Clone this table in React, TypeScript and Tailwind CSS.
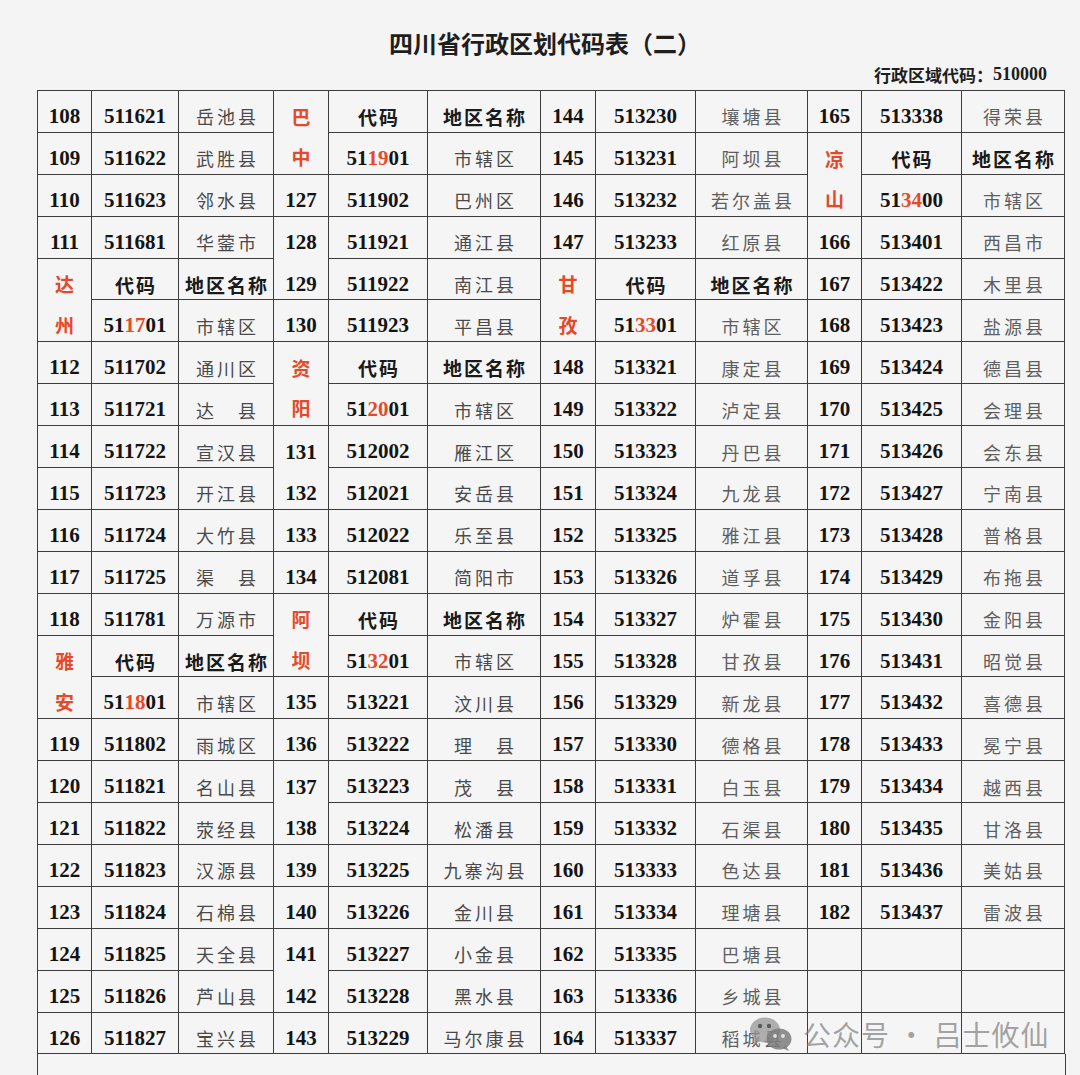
import React from "react";

type Entry =
  | { k: "r"; n: string; c: string; name: string; nb?: boolean }
  | { k: "h"; reg: [string, string] }
  | { k: "s"; c: string }
  | { k: "e" };

const r = (n: string, c: string, name: string, nb?: boolean): Entry => ({ k: "r", n, c, name, nb });
const h = (a: string, b: string): Entry => ({ k: "h", reg: [a, b] });
const s = (c: string): Entry => ({ k: "s", c });
const e: Entry = { k: "e" };

const B1: Entry[] = [
  r("108", "511621", "岳池县"),
  r("109", "511622", "武胜县"),
  r("110", "511623", "邻水县"),
  r("111", "511681", "华蓥市"),
  h("达", "州"),
  s("511701"),
  r("112", "511702", "通川区"),
  r("113", "511721", "达　县"),
  r("114", "511722", "宣汉县"),
  r("115", "511723", "开江县"),
  r("116", "511724", "大竹县"),
  r("117", "511725", "渠　县"),
  r("118", "511781", "万源市"),
  h("雅", "安"),
  s("511801"),
  r("119", "511802", "雨城区"),
  r("120", "511821", "名山县"),
  r("121", "511822", "荥经县"),
  r("122", "511823", "汉源县"),
  r("123", "511824", "石棉县"),
  r("124", "511825", "天全县"),
  r("125", "511826", "芦山县"),
  r("126", "511827", "宝兴县"),
];

const B2: Entry[] = [
  h("巴", "中"),
  s("511901"),
  r("127", "511902", "巴州区"),
  r("128", "511921", "通江县", true),
  r("129", "511922", "南江县"),
  r("130", "511923", "平昌县"),
  h("资", "阳"),
  s("512001"),
  r("131", "512002", "雁江区", true),
  r("132", "512021", "安岳县"),
  r("133", "512022", "乐至县"),
  r("134", "512081", "简阳市"),
  h("阿", "坝"),
  s("513201"),
  r("135", "513221", "汶川县"),
  r("136", "513222", "理　县"),
  r("137", "513223", "茂　县", true),
  r("138", "513224", "松潘县"),
  r("139", "513225", "九寨沟县"),
  r("140", "513226", "金川县"),
  r("141", "513227", "小金县", true),
  r("142", "513228", "黑水县"),
  r("143", "513229", "马尔康县"),
];

const B3: Entry[] = [
  r("144", "513230", "壤塘县"),
  r("145", "513231", "阿坝县"),
  r("146", "513232", "若尔盖县"),
  r("147", "513233", "红原县"),
  h("甘", "孜"),
  s("513301"),
  r("148", "513321", "康定县"),
  r("149", "513322", "泸定县"),
  r("150", "513323", "丹巴县"),
  r("151", "513324", "九龙县"),
  r("152", "513325", "雅江县"),
  r("153", "513326", "道孚县"),
  r("154", "513327", "炉霍县"),
  r("155", "513328", "甘孜县"),
  r("156", "513329", "新龙县"),
  r("157", "513330", "德格县"),
  r("158", "513331", "白玉县"),
  r("159", "513332", "石渠县"),
  r("160", "513333", "色达县"),
  r("161", "513334", "理塘县"),
  r("162", "513335", "巴塘县"),
  r("163", "513336", "乡城县"),
  r("164", "513337", "稻城县"),
];

const B4: Entry[] = [
  r("165", "513338", "得荣县"),
  h("凉", "山"),
  s("513400"),
  r("166", "513401", "西昌市"),
  r("167", "513422", "木里县"),
  r("168", "513423", "盐源县"),
  r("169", "513424", "德昌县"),
  r("170", "513425", "会理县"),
  r("171", "513426", "会东县"),
  r("172", "513427", "宁南县"),
  r("173", "513428", "普格县"),
  r("174", "513429", "布拖县"),
  r("175", "513430", "金阳县"),
  r("176", "513431", "昭觉县"),
  r("177", "513432", "喜德县"),
  r("178", "513433", "冕宁县"),
  r("179", "513434", "越西县"),
  r("180", "513435", "甘洛县"),
  r("181", "513436", "美姑县"),
  r("182", "513437", "雷波县"),
  e,
  e,
  e,
];

const BLOCKS = [B1, B2, B3, B4];

const cellBase =
  "flex items-center justify-center border-r-[1.5px] border-[#3d3d3d] leading-none whitespace-nowrap";
const numCls = "font-['Liberation_Serif',serif] font-bold text-[21px] text-[#141414] pt-[10px]";
const nameCls = "font-['Noto_Sans_CJK_SC',sans-serif] text-[18px] tracking-[3px] pl-[3px] pt-[10px]";
const headCls =
  "font-['Noto_Sans_CJK_SC',sans-serif] font-bold text-[19px] tracking-[2px] pl-[2px] text-[#1a1a1a] pt-[10px]";
const RED = "text-[#e5492a]";

function Block({ entry, bi }: { entry: Entry; bi: number }) {
  const nameColor = bi < 2 ? "text-[#4a4a4a]" : "text-[#5e5e5e]";
  const bb = "border-b-[1.5px]";
  if (entry.k === "r") {
    return (
      <>
        <div className={`${cellBase} ${entry.nb ? "" : bb} ${numCls}`}>{entry.n}</div>
        <div className={`${cellBase} ${bb} ${numCls}`}>{entry.c}</div>
        <div className={`${cellBase} ${bb} ${nameCls} ${nameColor}`}>{entry.name}</div>
      </>
    );
  }
  if (entry.k === "h") {
    return (
      <>
        <div
          className={`row-span-2 flex flex-col border-r-[1.5px] ${bb} border-[#3d3d3d] font-['Noto_Sans_CJK_SC',sans-serif] font-bold text-[19px] leading-none ${RED}`}
        >
          <span className="flex flex-1 items-center justify-center pt-[8px]">{entry.reg[0]}</span>
          <span className="flex flex-1 items-center justify-center pt-[6px]">{entry.reg[1]}</span>
        </div>
        <div className={`${cellBase} ${bb} ${headCls}`}>代码</div>
        <div className={`${cellBase} ${bb} ${headCls}`}>地区名称</div>
      </>
    );
  }
  if (entry.k === "s") {
    return (
      <>
        <div className={`${cellBase} ${bb} ${numCls}`}>
          <span>{entry.c.slice(0, 2)}</span>
          <span className={RED}>{entry.c.slice(2, 4)}</span>
          <span>{entry.c.slice(4)}</span>
        </div>
        <div className={`${cellBase} ${bb} ${nameCls} ${nameColor}`}>市辖区</div>
      </>
    );
  }
  return (
    <>
      <div className={`${cellBase} ${bb}`} />
      <div className={`${cellBase} ${bb}`} />
      <div className={`${cellBase} ${bb}`} />
    </>
  );
}

function WeChatIcon() {
  return (
    <svg width="44" height="34" viewBox="0 0 44 34">
      <ellipse cx="16" cy="13" rx="15" ry="12.5" fill="rgba(150,150,150,0.75)" />
      <path d="M6 21 L4 28 L12 24 Z" fill="rgba(150,150,150,0.75)" />
      <circle cx="11" cy="9" r="2.2" fill="rgba(70,70,70,0.8)" />
      <circle cx="20" cy="9" r="2.2" fill="rgba(70,70,70,0.8)" />
      <ellipse cx="30" cy="22" rx="12.5" ry="10.5" fill="rgba(125,125,125,0.85)" />
      <path d="M37 29 L40 34 L33 31 Z" fill="rgba(125,125,125,0.85)" />
      <circle cx="26" cy="19" r="1.9" fill="rgba(235,235,235,0.9)" />
      <circle cx="34" cy="19" r="1.9" fill="rgba(235,235,235,0.9)" />
    </svg>
  );
}

export default function App() {
  const rows = Array.from({ length: 23 }, (_, i) => i);
  return (
    <div className="relative w-[1080px] h-[1075px] overflow-hidden bg-[#f4f4f4]">
      <div className="pt-[29px] pl-[10px] text-center font-['Noto_Sans_CJK_SC',sans-serif] font-bold text-[24px] leading-[28px] text-[#1e1e1e]">
        四川省行政区划代码表（二）
      </div>
      <div className="mt-[7px] flex justify-end pr-[33px] h-[20px] items-center leading-none text-[#1e1e1e]">
        <span className="font-['Noto_Sans_CJK_SC',sans-serif] font-bold text-[17px]">行政区域代码：</span>
        <span className="font-['Liberation_Serif',serif] font-bold text-[18px]">510000</span>
      </div>
      <div className="mt-[6px] ml-[37px]">
        <div className="grid w-fit grid-cols-[54px_87px_95px_55px_99px_113px_55px_100px_112px_54px_100px_103px] auto-rows-[41.9px] border-l-[1.5px] border-t-[1.5px] border-[#3d3d3d] bg-[#f5f5f5]">
          {rows.map((ri) =>
            BLOCKS.map((b, bi) => <Block key={`${ri}-${bi}`} entry={b[ri]} bi={bi} />)
          )}
        </div>
        <div className="h-[40px] w-[1028.5px] border-x-[1.5px] border-[#3d3d3d] bg-[#f5f5f5]" />
      </div>
      <div className="absolute left-[749px] top-[1017px] flex items-center gap-[10px] font-['Noto_Sans_CJK_SC',sans-serif] text-[28px] leading-none text-[rgba(125,125,125,0.7)]">
        <WeChatIcon />
        <span className="tracking-[1px]">公众号 · 吕士攸仙</span>
      </div>
    </div>
  );
}
